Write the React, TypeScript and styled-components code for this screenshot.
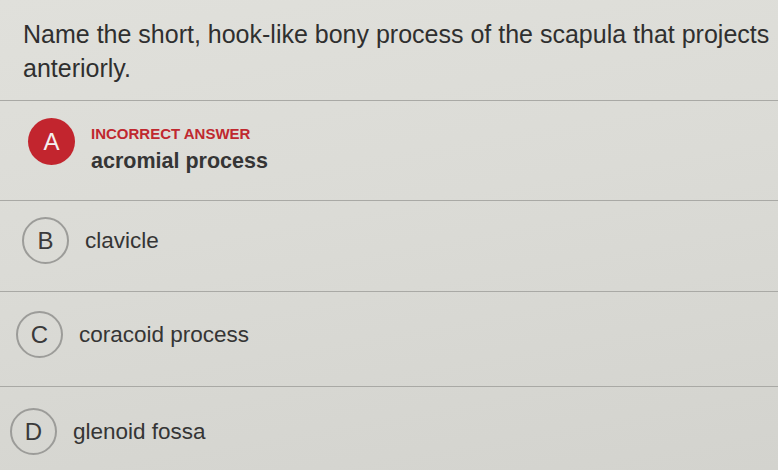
import React from 'react'
import styled, { createGlobalStyle } from 'styled-components'

const GlobalStyle = createGlobalStyle`
    html, body {
        margin: 0;
        padding: 0;
        width: 778px;
        height: 470px;
        overflow: hidden;
    }
    body {
        font-family: "Liberation Sans", Arial, sans-serif;
        background: #dadad5;
    }
`

const Page = styled.div`
    width: 778px;
    height: 470px;
    background: linear-gradient(170deg, #e0e0db 0%, #dbdbd6 45%, #d3d3ce 100%);
    color: #333333;
    overflow: hidden;
`

const Question = styled.div`
    padding: 17px 6px 0 23px;
    height: 83px;
    font-size: 25px;
    line-height: 34px;
    color: #2f2f2f;
    border-bottom: 1px solid #a9a9a5;
`

const Option = styled.div<{ $height: number; $indent: number; $top: number }>`
    height: ${p => p.$height}px;
    padding-left: ${p => p.$indent}px;
    padding-top: ${p => p.$top}px;
    display: flex;
    align-items: flex-start;
    gap: 16px;
    border-bottom: 1px solid #a9a9a5;
    box-sizing: border-box;

    &:last-child {
        border-bottom: none;
    }
`

const Badge = styled.div<{ $wrong?: boolean }>`
    width: 47px;
    height: 47px;
    min-width: 47px;
    border-radius: 100%;
    box-sizing: border-box;
    display: flex;
    align-items: center;
    justify-content: center;
    font-size: 24px;
    background: ${p => (p.$wrong ? '#c2252e' : 'transparent')};
    color: ${p => (p.$wrong ? '#f4f0f0' : '#3a3a3a')};
    border: ${p => (p.$wrong ? 'none' : '2px solid #9c9c99')};
`

const Body = styled.div`
    display: flex;
    flex-direction: column;
    justify-content: center;
    min-height: 47px;
`

const Status = styled.div`
    font-size: 15px;
    font-weight: bold;
    color: #c0282f;
    margin-top: 7px;
    margin-bottom: 7px;
`

const Label = styled.div<{ $bold?: boolean }>`
    font-size: ${p => (p.$bold ? 21.5 : 22.5)}px;
    font-weight: ${p => (p.$bold ? 'bold' : 'normal')};
    color: #353535;
`

const options = [
    { letter: 'A', text: 'acromial process', wrong: true, height: 100, indent: 28, top: 17 },
    { letter: 'B', text: 'clavicle', height: 91, indent: 22, top: 16 },
    { letter: 'C', text: 'coracoid process', height: 95, indent: 16, top: 19 },
    { letter: 'D', text: 'glenoid fossa', height: 100, indent: 10, top: 21 },
]

const App: React.FC = () => {
    return (
        <Page>
            <GlobalStyle />
            <Question>
                Name the short, hook-like bony process of the scapula that projects anteriorly.
            </Question>
            {options.map(o => (
                <Option key={o.letter} $height={o.height} $indent={o.indent} $top={o.top}>
                    <Badge $wrong={o.wrong}>{o.letter}</Badge>
                    <Body>
                        {o.wrong && <Status>INCORRECT ANSWER</Status>}
                        <Label $bold={o.wrong}>{o.text}</Label>
                    </Body>
                </Option>
            ))}
        </Page>
    )
}

export default App
